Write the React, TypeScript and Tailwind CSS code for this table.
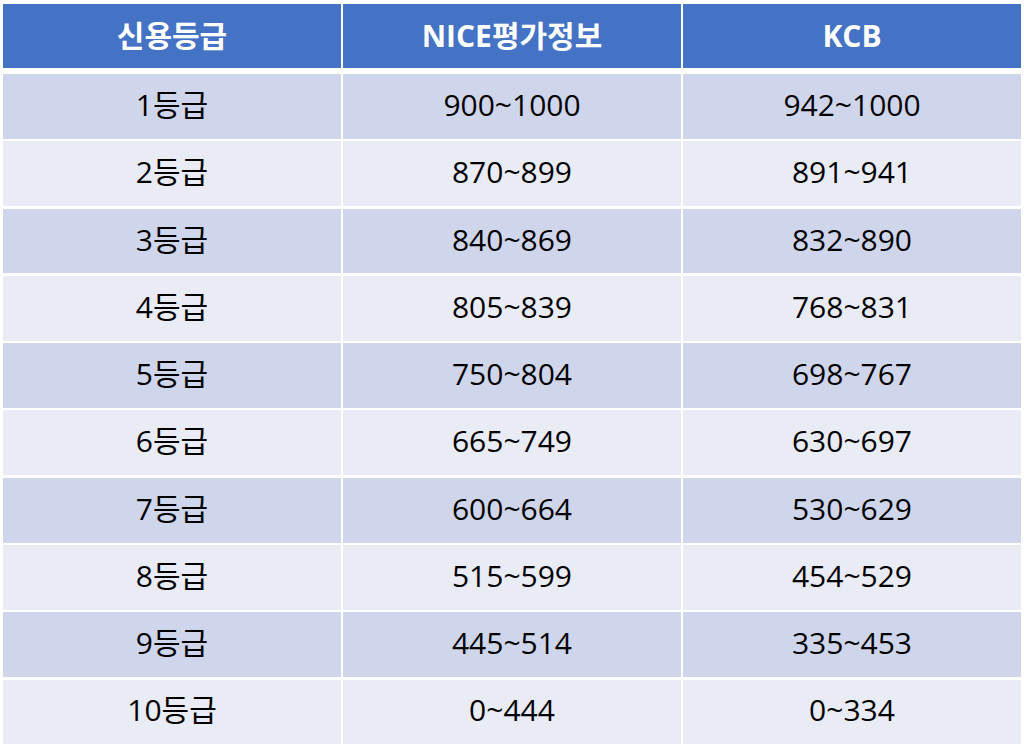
import React from "react";

const ROWS: [string, string, string][] = [
  ["1등급", "900~1000", "942~1000"],
  ["2등급", "870~899", "891~941"],
  ["3등급", "840~869", "832~890"],
  ["4등급", "805~839", "768~831"],
  ["5등급", "750~804", "698~767"],
  ["6등급", "665~749", "630~697"],
  ["7등급", "600~664", "530~629"],
  ["8등급", "515~599", "454~529"],
  ["9등급", "445~514", "335~453"],
  ["10등급", "0~444", "0~334"],
];

const HEADERS = ["신용등급", "NICE평가정보", "KCB"];

export default function App() {
  return (
    <div
      className="w-[1024px] h-[749px] bg-white pt-[4px] pl-[3px]"
      style={{ fontFamily: '"Open Sans", "Noto Sans CJK KR", sans-serif' }}
    >
      <div className="w-[1018px] flex flex-col">
        {/* Header */}
        <div className="grid grid-cols-3 gap-x-[2px] h-[64px]">
          {HEADERS.map((h) => (
            <div
              key={h}
              className="bg-[#4472c4] text-white font-bold text-[30px] leading-none flex items-center justify-center"
            >
              {h}
            </div>
          ))}
        </div>

        {/* Body rows */}
        <div className="mt-[6px] flex flex-col gap-y-[2.4px]">
          {ROWS.map((row, i) => (
            <div key={row[0]} className="grid grid-cols-3 gap-x-[2px] h-[64.9px]">
              {row.map((cell, j) => (
                <div
                  key={j}
                  className={`${
                    i % 2 === 0 ? "bg-[#cfd5ea]" : "bg-[#e9ebf5]"
                  } text-black text-[30px] leading-none flex items-center justify-center pb-[3px]`}
                >
                  {cell}
                </div>
              ))}
            </div>
          ))}
        </div>
      </div>
    </div>
  );
}
